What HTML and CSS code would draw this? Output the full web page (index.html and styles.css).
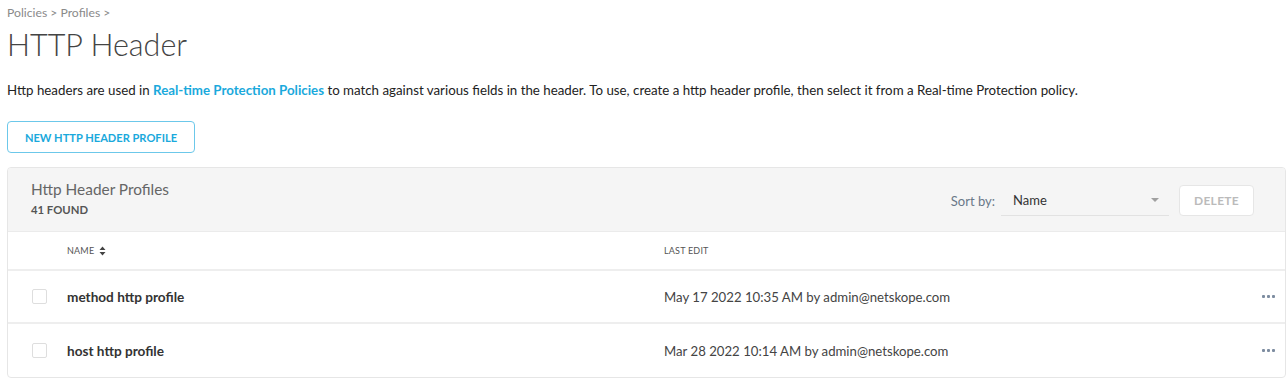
FILE: index.html
```html
<!DOCTYPE html>
<html>
<head>
<meta charset="utf-8">
<link rel="stylesheet" href="styles.css">
</head>
<body>
<div class="page">
  <div class="crumbs">Policies &gt; Profiles &gt;</div>
  <h1 class="title">HTTP Header</h1>
  <p class="desc">Http headers are used in <a class="link">Real-time Protection Policies</a> to match against various fields in the header. To use, create a http header profile, then select it from a Real-time Protection policy.</p>
  <button class="btn-new">NEW HTTP HEADER PROFILE</button>
  <div class="panel">
    <div class="panel-head">
      <div class="ph-left">
        <div class="ph-title">Http Header Profiles</div>
        <div class="ph-count">41 FOUND</div>
      </div>
      <div class="ph-right">
        <span class="sort-label">Sort by:</span>
        <div class="select"><span>Name</span><span class="caret"></span></div>
        <button class="btn-delete">DELETE</button>
      </div>
    </div>
    <div class="row head-row">
      <div class="c-check"></div>
      <div class="c-name th">NAME <svg class="sort-ic" width="7" height="10" viewBox="0 0 7 10"><path d="M3.5 0.5L6.5 4H0.5Z M3.5 9.5L6.5 6H0.5Z" fill="#444"/></svg></div>
      <div class="c-edit th">LAST EDIT</div>
      <div class="c-act"></div>
    </div>
    <div class="row">
      <div class="c-check"><span class="cb"></span></div>
      <div class="c-name nm">method http profile</div>
      <div class="c-edit ed">May 17 2022 10:35 AM by admin@netskope.com</div>
      <div class="c-act"><span class="dots"><i></i><i></i><i></i></span></div>
    </div>
    <div class="row">
      <div class="c-check"><span class="cb"></span></div>
      <div class="c-name nm">host http profile</div>
      <div class="c-edit ed">Mar 28 2022 10:14 AM by admin@netskope.com</div>
      <div class="c-act"><span class="dots"><i></i><i></i><i></i></span></div>
    </div>
  </div>
</div>
</body>
</html>
```
FILE: styles.css
```css
* { box-sizing: border-box; }
html, body { margin: 0; padding: 0; background: #fff; }
body { font-family: Lato, "Open Sans", sans-serif; color: #333; }
.page { padding: 5px 0 0 7px; width: 1286px; }
.crumbs { font-size: 12.2px; color: #8a8a8a; line-height: 16px; }
.title { margin: 4px 0 0 0; font-size: 30.5px; font-weight: 300; color: #444; line-height: 38px; }
.desc { margin: 18px 0 0 0; font-size: 13.3px; color: #222; line-height: 18px; }
.link { color: #1aa9dc; font-weight: 700; }
.btn-new { margin-top: 22px; height: 32px; width: 188px; background: #fff; border: 1px solid #6cc8ea; border-radius: 4px; color: #1aa9dc; font-family: Lato, sans-serif; font-weight: 700; font-size: 11.1px; padding: 0; }
.panel { margin-top: 14px; width: 1279px; border: 1px solid #e6e6e6; border-radius: 4px; overflow: hidden; }
.panel-head { height: 64px; background: #f5f5f5; border-bottom: 1px solid #ebebeb; display: flex; justify-content: space-between; }
.ph-left { padding: 11px 0 0 23px; }
.ph-title { font-size: 15.4px; color: #666; line-height: 20px; }
.ph-count { margin-top: 4px; font-size: 11.3px; font-weight: 700; color: #555; line-height: 14px; }
.ph-right { display: flex; align-items: center; padding-right: 31px; padding-top: 2px; }
.sort-label { font-size: 13px; color: #6a7888; margin-right: 6px; }
.select { width: 168px; height: 31px; border-bottom: 1px solid #e2e2e2; display: flex; align-items: center; justify-content: space-between; padding: 0 10px 0 12px; font-size: 13px; color: #333; }
.caret { width: 0; height: 0; border-left: 4px solid transparent; border-right: 4px solid transparent; border-top: 4px solid #a0a0a0; }
.btn-delete { margin-left: 10px; width: 75px; height: 31px; background: #fff; border: 1px solid #e6e6e6; border-radius: 4px; color: #bbb; font-family: Lato, sans-serif; font-size: 12px; font-weight: 700; letter-spacing: 0.3px; padding: 0; }
.row { display: grid; grid-template-columns: 59px 597px 1fr 30px; align-items: center; height: 53px; border-bottom: 2px solid #eeeeee; }
.row:last-child { border-bottom: none; }
.head-row { height: 39px; }
.th { font-size: 9px; color: #555; letter-spacing: 0.2px; display: flex; align-items: center; }
.sort-ic { margin-left: 5px; }
.c-check { padding-left: 24px; display: flex; align-items: center; }
.cb { width: 15px; height: 15px; border: 1px solid #dedede; border-radius: 2px; background: #fff; }
.nm { font-size: 13.6px; font-weight: 700; color: #333; }
.ed { font-size: 13.2px; color: #444; }
.c-act { display: flex; justify-content: flex-start; padding-left: 7px; }
.dots { display: flex; gap: 2px; }
.dots i { display: block; width: 3px; height: 3px; background: #7d8ca0; border-radius: 1px; }
```
